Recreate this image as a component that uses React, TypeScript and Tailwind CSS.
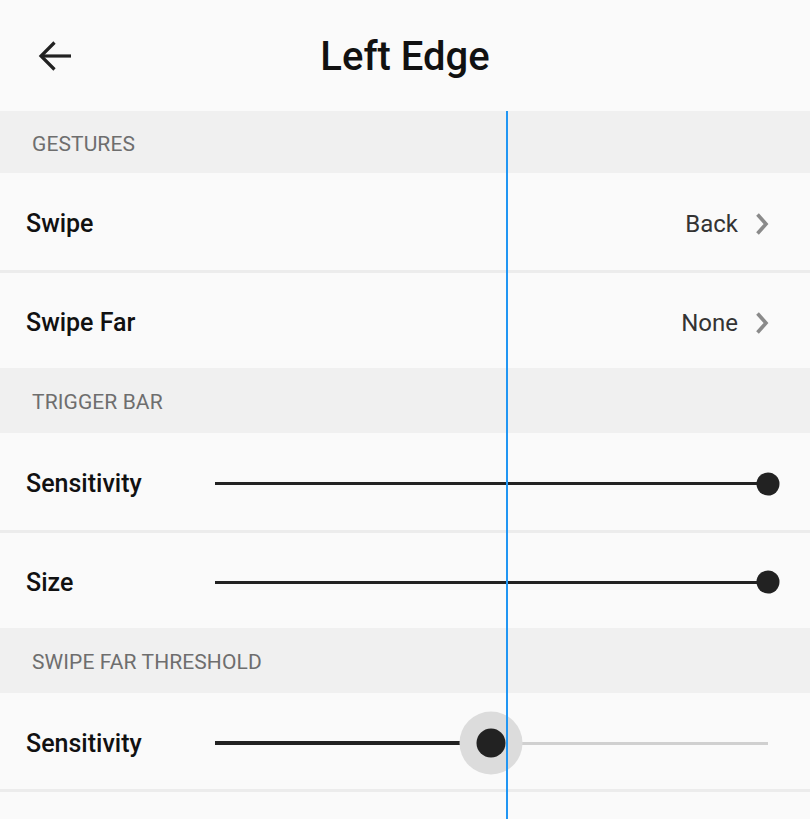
import React from "react";

const font = { fontFamily: "Roboto, 'Noto Sans', sans-serif" };

function Section({ title, h }: { title: string; h: string }) {
  return (
    <div className={`${h} bg-[#f0f0f0] flex items-center pl-[32px] pt-[5px]`}>
      <span className="text-[21px] text-[#6e6e6e] tracking-[0.1px]">{title}</span>
    </div>
  );
}

function Chevron() {
  return (
    <svg width="16" height="24" viewBox="0 0 16 24" className="ml-[16px]">
      <polyline points="3.5,2.5 12,12 3.5,21.5" fill="none" stroke="#8a8a8a" strokeWidth="3.6" strokeLinecap="butt" strokeLinejoin="miter" />
    </svg>
  );
}

function NavRow({ label, value, h }: { label: string; value: string; h: string }) {
  return (
    <div className={`${h} flex items-center pl-[26px] pr-[40px] pt-[5px]`}>
      <span className="text-[25px] font-medium text-[#111]">{label}</span>
      <div className="ml-auto flex items-center">
        <span className="text-[24px] text-[#333]">{value}</span>
        <Chevron />
      </div>
    </div>
  );
}

function SliderRow({ label, value, h, pressed }: { label: string; value: number; h: string; pressed?: boolean }) {
  return (
    <div className={`${h} flex items-center pl-[26px] pr-[42px] pt-[4px]`}>
      <span className="w-[189px] text-[25px] font-medium text-[#111] pt-[1px]">{label}</span>
      <div className="relative flex-1 h-[4px]">
        <div className="absolute inset-y-0 left-0 right-0 my-auto h-[3px] bg-[#d0d0d0]" />
        <div className="absolute inset-y-0 left-0 h-[3.5px] my-auto bg-[#222]" style={{ width: `${value}%` }} />
        {pressed && (
          <div
            className="absolute top-1/2 w-[63px] h-[63px] rounded-full bg-[#dcdcdc] -translate-x-1/2 -translate-y-1/2"
            style={{ left: `${value}%` }}
          />
        )}
        <div
          className={`absolute top-1/2 rounded-full bg-[#222] -translate-x-1/2 -translate-y-1/2 ${pressed ? "w-[29px] h-[29px]" : "w-[23px] h-[23px]"}`}
          style={{ left: `${value}%` }}
        />
      </div>
    </div>
  );
}

function Sep() {
  return <div className="h-[2.5px] bg-[#ececec]" />;
}

export default function App() {
  return (
    <div className="relative w-[810px] h-[819px] overflow-hidden bg-[#fafafa]" style={font}>
      <header className="h-[111px] grid grid-cols-[1fr_auto_1fr] items-center">
        <div className="pl-[37px] flex items-center">
          <svg width="36" height="36" viewBox="0 0 36 36">
            <line x1="4" y1="18" x2="34" y2="18" stroke="#222" strokeWidth="3.2" />
            <polyline points="17.5,4.5 4,18 17.5,31.5" fill="none" stroke="#222" strokeWidth="3.2" />
          </svg>
        </div>
        <h1 className="text-[40px] font-medium text-[#111] leading-none pt-[2px]">Left Edge</h1>
        <div />
      </header>
      <Section title="GESTURES" h="h-[62px]" />
      <NavRow label="Swipe" value="Back" h="h-[97px]" />
      <Sep />
      <NavRow label="Swipe Far" value="None" h="h-[95.5px]" />
      <Section title="TRIGGER BAR" h="h-[65px]" />
      <SliderRow label="Sensitivity" value={100} h="h-[97px]" />
      <Sep />
      <SliderRow label="Size" value={100} h="h-[95.5px]" />
      <Section title="SWIPE FAR THRESHOLD" h="h-[65px]" />
      <SliderRow label="Sensitivity" value={49.9} h="h-[96px]" pressed />
      <Sep />
      <div className="h-[30px]" />
      <div className="absolute left-[506px] top-[111px] bottom-0 w-[2px] bg-[#2196f3]" />
    </div>
  );
}
